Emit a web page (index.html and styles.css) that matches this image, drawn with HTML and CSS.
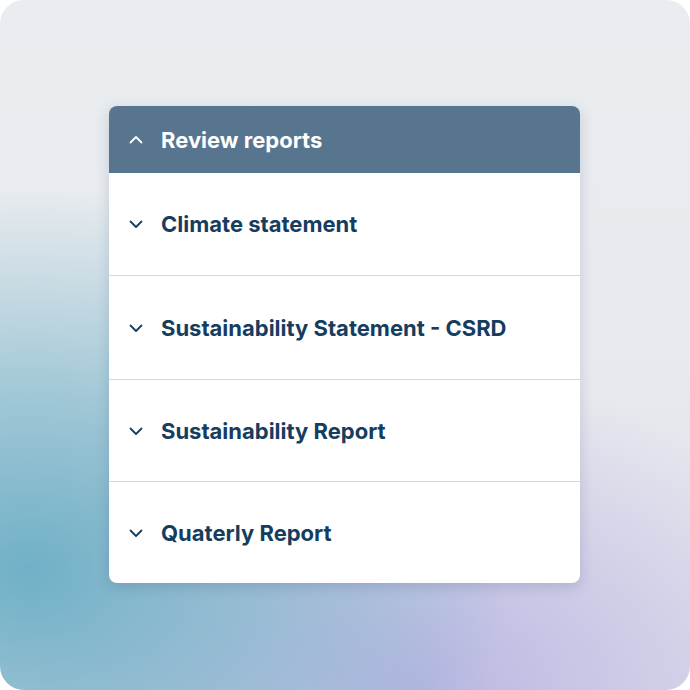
FILE: index.html
```html
<!DOCTYPE html>
<html lang="en">
    <head>
        <meta charset="utf-8">
        <title>Review reports</title>
        <link rel="stylesheet" href="styles.css">
    </head>
    <body>
        <div class="backdrop">
            <section class="accordion">
                <header class="accordion-head">
                    <svg class="chevron" viewBox="0 0 20 20"><path d="M4.5 12.5 L10 7 L15.5 12.5"/></svg>
                    <h2>Review reports</h2>
                </header>
                <ul class="report-list">
                    <li class="report-item">
                        <svg class="chevron" viewBox="0 0 20 20"><path d="M4.5 7.5 L10 13 L15.5 7.5"/></svg>
                        <span>Climate statement</span>
                    </li>
                    <li class="report-item">
                        <svg class="chevron" viewBox="0 0 20 20"><path d="M4.5 7.5 L10 13 L15.5 7.5"/></svg>
                        <span>Sustainability Statement - CSRD</span>
                    </li>
                    <li class="report-item">
                        <svg class="chevron" viewBox="0 0 20 20"><path d="M4.5 7.5 L10 13 L15.5 7.5"/></svg>
                        <span>Sustainability Report</span>
                    </li>
                    <li class="report-item">
                        <svg class="chevron" viewBox="0 0 20 20"><path d="M4.5 7.5 L10 13 L15.5 7.5"/></svg>
                        <span>Quaterly Report</span>
                    </li>
                </ul>
            </section>
        </div>
    </body>
</html>
```

FILE: styles.css
```css
body {
    margin: 0;
    background-color: #fff;
    font-family: 'Inter', 'Noto Sans', sans-serif;
}

.backdrop {
    width: 690px;
    height: 690px;
    border-radius: 24px;
    overflow: hidden;
    box-sizing: border-box;
    padding: 106px 110px 0 109px;
    background:
        radial-gradient(ellipse 480px 380px at 30px 570px, rgba(112, 176, 198, 1) 0%, rgba(112, 176, 198, 0.6) 45%, rgba(112, 176, 198, 0) 100%),
        radial-gradient(ellipse 440px 320px at 420px 690px, rgba(186, 182, 226, 1) 0%, rgba(186, 182, 226, 0.5) 50%, rgba(186, 182, 226, 0) 100%),
        linear-gradient(#e9edf0, #e7eaee 50%, #e2e1ec);
}

.accordion {
    background-color: white;
    border-radius: 8px;
    overflow: hidden;
    box-shadow: 0 4px 14px rgba(40, 60, 100, 0.18);
}

.accordion-head {
    display: flex;
    align-items: center;
    gap: 15px;
    height: 67px;
    padding-left: 17px;
    background-color: #58758f;
    color: white;
}

.accordion-head h2 {
    margin: 0;
    font-size: 22px;
    font-weight: 700;
}

.chevron {
    width: 20px;
    height: 20px;
    fill: none;
    stroke: currentColor;
    stroke-width: 1.8;
    stroke-linecap: round;
    stroke-linejoin: round;
}

.report-list {
    list-style-type: none;
    margin: 0;
    padding: 0;
}

.report-item {
    display: flex;
    align-items: center;
    gap: 15px;
    height: 101px;
    padding-left: 17px;
    color: #163d5e;
    font-size: 22px;
    font-weight: 700;
    border-top: 1px solid #d5d8dc;
}

.report-item:first-child {
    border-top: none;
    height: 102px;
}

.report-item:nth-child(2) {
    height: 103px;
}
```
